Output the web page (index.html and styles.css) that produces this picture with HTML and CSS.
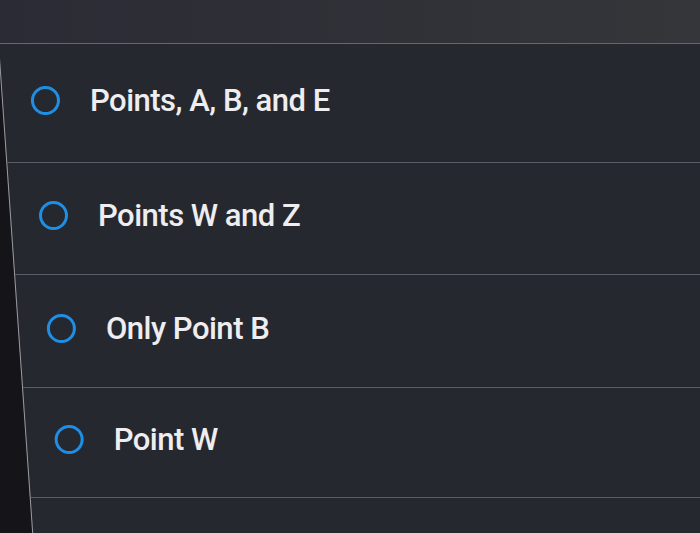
FILE: index.html
```html
<!DOCTYPE html>
<html lang="en">
<head>
    <meta charset="UTF-8">
    <meta name="viewport" content="width=device-width, initial-scale=1.0">
    <title>Question Options</title>
    <link rel="stylesheet" href="styles.css">
</head>
<body>
    <div class="screen">
        <div class="top-bar"></div>

        <section class="options">
            <label class="option">
                <span class="option-inner">
                    <span class="radio"></span>
                    <span class="option-text">Points, A, B, and E</span>
                </span>
            </label>
            <label class="option">
                <span class="option-inner">
                    <span class="radio"></span>
                    <span class="option-text">Points W and Z</span>
                </span>
            </label>
            <label class="option">
                <span class="option-inner">
                    <span class="radio"></span>
                    <span class="option-text">Only Point B</span>
                </span>
            </label>
            <label class="option">
                <span class="option-inner">
                    <span class="radio"></span>
                    <span class="option-text">Point W</span>
                </span>
            </label>
            <div class="option option-empty"></div>
        </section>
    </div>
</body>
</html>
```

FILE: styles.css
```css
body {
    margin: 0;
    padding: 0;
    background-color: #141419;
    font-family: Roboto, "Liberation Sans", Arial, sans-serif;
}

.screen {
    width: 700px;
    height: 533px;
    overflow: hidden;
}

.top-bar {
    height: 43px;
    background: linear-gradient(90deg, #2a2b34, #35363a);
    border-bottom: 1px solid #666774;
}

/* the photo is taken at an angle, so the panel leans */
.options {
    margin-left: -2px;
    width: 705px;
    height: 489px;
    background-color: #262830;
    border-left: 1.5px solid #9a9ba2;
    transform: skewX(4deg);
    transform-origin: 0 0;
}

.option {
    display: flex;
    align-items: center;
    height: 119px;
    border-bottom: 1px solid #5a5c68;
    box-sizing: border-box;
}

.option:nth-child(2) {
    height: 112px;
}

.option:nth-child(3) {
    height: 113px;
}

.option:nth-child(4) {
    height: 110px;
}

.option-empty {
    border-bottom: none;
}

.option-inner {
    display: flex;
    align-items: center;
    padding-left: 28px;
    margin-top: -6px;
    transform: skewX(-4deg);
}

.radio {
    width: 23px;
    height: 23px;
    border: 3.5px solid #1f8fe6;
    border-radius: 50%;
    margin-right: 30px;
}

.option-text {
    color: #eeedf0;
    font-size: 31px;
    font-weight: 500;
    letter-spacing: -0.5px;
}
```
